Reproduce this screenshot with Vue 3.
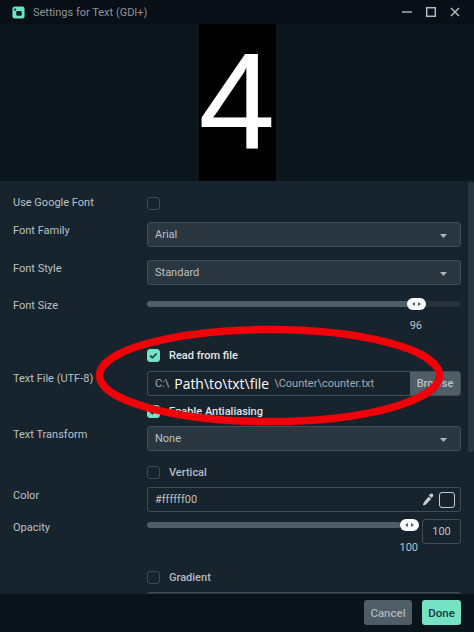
<script setup>
const selectChevron = 'M0 0h7L3.5 4z'
</script>

<template>
  <div class="win">
    <header class="titlebar">
      <svg class="logo" viewBox="0 0 14 14" width="13" height="13">
        <rect width="13" height="13" x="0.5" y="0.5" rx="2.5" fill="#6fe3c4" />
        <rect x="4.5" y="5.5" width="6" height="5" rx="1.4" fill="#10222a" />
        <circle cx="3.4" cy="4" r="1.2" fill="#10222a" />
      </svg>
      <span class="title">Settings for Text (GDI+)</span>
      <div class="winbtns">
        <svg viewBox="0 0 12 12" width="12" height="12"><path d="M1 6h10" stroke="#b4b9bc" stroke-width="1.4" /></svg>
        <svg viewBox="0 0 12 12" width="12" height="12"><rect x="1.7" y="1.7" width="8.6" height="8.6" fill="none" stroke="#b4b9bc" stroke-width="1.5" /></svg>
        <svg viewBox="0 0 12 12" width="12" height="12"><path d="M2 2l8 8M10 2l-8 8" stroke="#b4b9bc" stroke-width="1.5" /></svg>
      </div>
    </header>

    <section class="preview">
      <div class="canvas">4</div>
    </section>

    <main class="form">
      <div class="row r-google">
        <label>Use Google Font</label>
        <div class="checkline"><span class="check"></span></div>
      </div>

      <div class="row r-family">
        <label>Font Family</label>
        <div class="select">Arial<svg viewBox="0 0 7 4" width="7" height="4"><path :d="selectChevron" /></svg></div>
      </div>

      <div class="row r-style">
        <label>Font Style</label>
        <div class="select">Standard<svg viewBox="0 0 7 4" width="7" height="4"><path :d="selectChevron" /></svg></div>
      </div>

      <div class="row r-size">
        <label>Font Size</label>
        <div>
          <div class="track">
            <div class="fill fill-size"></div>
            <div class="thumb thumb-size"><i class="al"></i><i class="ar"></i></div>
          </div>
          <div class="val val-size">96</div>
        </div>
      </div>

      <div class="row r-read">
        <label></label>
        <div class="checkline"><span class="check on"><svg viewBox="0 0 13 13"><path d="M3.2 6.6l2.2 2.2 4.2-4.4" /></svg></span><span class="cl">Read from file</span></div>
      </div>

      <div class="row r-file">
        <label>Text File (UTF-8)</label>
        <div class="filebox">
          <div class="path"><span>C:\</span><span class="big">Path\to\txt\file</span><span>\Counter\counter.txt</span></div>
          <div class="browse">Browse</div>
        </div>
      </div>

      <div class="row r-anti">
        <label></label>
        <div class="checkline"><span class="check on"><svg viewBox="0 0 13 13"><path d="M3.2 6.6l2.2 2.2 4.2-4.4" /></svg></span><span class="cl">Enable Antialiasing</span></div>
      </div>

      <div class="row r-trans">
        <label>Text Transform</label>
        <div class="select">None<svg viewBox="0 0 7 4" width="7" height="4"><path :d="selectChevron" /></svg></div>
      </div>

      <div class="row r-vert">
        <label></label>
        <div class="checkline"><span class="check"></span><span class="cl dim">Vertical</span></div>
      </div>

      <div class="row r-color">
        <label>Color</label>
        <div class="colorbox">
          <span>#ffffff00</span>
          <svg class="drop" viewBox="0 0 12 13" width="12" height="13">
            <path d="M6.6 3.4l2.6 2.6-5 5.2c-.5.5-1.6.8-2.6 1.2-.5-.1-.7-.4-.6-.8.3-1 .6-2 1.1-2.6z" fill="#c6cbce" />
            <path d="M6.8 2.2l1.3-1.3c.8-.7 2-.7 2.7.1s.8 1.9 0 2.7L9.5 5z" fill="#c6cbce" />
          </svg>
          <span class="swatch"></span>
        </div>
      </div>

      <div class="row r-op">
        <label>Opacity</label>
        <div class="opline">
          <div class="opslider">
            <div class="track">
              <div class="fill fill-op"></div>
              <div class="thumb thumb-op"><i class="al"></i><i class="ar"></i></div>
            </div>
            <div class="val val-op">100</div>
          </div>
          <div class="numbox">100</div>
        </div>
      </div>

      <div class="row r-grad">
        <label></label>
        <div class="checkline"><span class="check"></span><span class="cl dim">Gradient</span></div>
      </div>

      <div class="row r-next">
        <label></label>
        <div class="select"></div>
      </div>

      <div class="scrollbar"></div>
    </main>

    <footer class="foot">
      <button class="btn cancel">Cancel</button>
      <button class="btn done">Done</button>
    </footer>

    <svg class="annot" viewBox="0 0 474 632" width="474" height="632">
      <ellipse cx="269.5" cy="375.5" rx="170" ry="46" fill="none" stroke="#f00008" stroke-width="7.5" />
    </svg>
  </div>
</template>

<style>
html, body { margin: 0; background: #17232d; }
</style>

<style scoped>
.win {
  position: relative;
  width: 474px;
  height: 632px;
  overflow: hidden;
  display: flex;
  flex-direction: column;
  background: #17232d;
  font-family: Roboto, "Liberation Sans", sans-serif;
  font-size: 11px;
  color: #bcc2c6;
}
.titlebar {
  height: 24px;
  flex: none;
  display: flex;
  align-items: center;
  padding-left: 12px;
  background: #080f16;
}
.logo { flex: none; }
.title { margin-left: 8px; font-size: 11px; color: #8e959a; }
.winbtns { margin-left: auto; margin-right: 13px; display: flex; gap: 12px; }
.preview {
  height: 157px;
  flex: none;
  display: flex;
  justify-content: center;
  background: #0c171d;
}
.canvas {
  box-sizing: border-box;
  width: 77px;
  height: 157px;
  padding-right: 6px;
  background: #000;
  color: #fff;
  text-align: center;
  font-family: "Liberation Sans", Arial, sans-serif;
  font-size: 138px;
  line-height: 153px;
}
.form {
  position: relative;
  flex: 1;
  min-height: 0;
  overflow: hidden;
}
.row {
  display: grid;
  grid-template-columns: 134px 314px;
  padding-left: 13px;
}
.row label { line-height: 13px; color: #bcc2c6; }
.check {
  display: block;
  box-sizing: border-box;
  width: 13px;
  height: 13px;
  border: 1px solid #3c4a54;
  border-radius: 3px;
  flex: none;
}
.check.on { background: #75e2c3; border-color: #75e2c3; }
.check.on svg { display: block; width: 13px; height: 13px; margin: -1px; fill: none; stroke: #17303a; stroke-width: 1.5; }
.checkline { display: flex; align-items: center; gap: 9px; height: 13px; }
.cl { color: #e3e6e8; font-weight: 500; }
.cl.dim { color: #b5bcc0; }
.select {
  box-sizing: border-box;
  height: 25px;
  display: flex;
  align-items: center;
  justify-content: space-between;
  padding: 0 13px 0 7px;
  border: 1px solid #414e57;
  border-radius: 3px;
  background: #2b3740;
  color: #bcc2c6;
}
.select svg { fill: #b0b6ba; margin-top: 2px; }
.track {
  position: relative;
  height: 6px;
  border-radius: 3px;
  background: #25323b;
}
.fill {
  height: 6px;
  border-radius: 3px;
  background: #4f5d66;
}
.fill-size { width: 266px; }
.fill-op { width: 254px; }
.thumb {
  position: absolute;
  top: -3px;
  width: 19px;
  height: 12px;
  border-radius: 6px;
  background: #fff;
}
.thumb-size { left: 260px; }
.thumb-op { left: 253px; }
.thumb .al, .thumb .ar {
  position: absolute;
  top: 3.5px;
  width: 0;
  height: 0;
  border-top: 2.5px solid transparent;
  border-bottom: 2.5px solid transparent;
}
.thumb .al { left: 5px; border-right: 3px solid #4f5d66; }
.thumb .ar { right: 5px; border-left: 3px solid #4f5d66; }
.val { line-height: 13px; color: #bcc2c6; text-align: right; }
.val-size { margin-top: 12px; padding-right: 39px; }
.val-op { margin-top: 13px; }
.filebox {
  box-sizing: border-box;
  height: 25px;
  display: flex;
  border: 1px solid #414e57;
  border-radius: 3px;
  overflow: hidden;
}
.path {
  flex: 1;
  display: flex;
  align-items: center;
  gap: 5px;
  padding-left: 7px;
  font-size: 11px;
  color: #a4abb0;
}
.path .big {
  font-family: "Open Sans", "Noto Sans", sans-serif;
  font-size: 13.9px;
  color: #fff;
}
.browse {
  width: 50px;
  display: flex;
  align-items: center;
  justify-content: center;
  background: #4f5d66;
  color: #bcc2c6;
  font-weight: 500;
}
.colorbox {
  box-sizing: border-box;
  height: 25px;
  display: flex;
  align-items: center;
  padding: 0 5px 0 7px;
  border: 1px solid #414e57;
  border-radius: 3px;
  color: #bcc2c6;
}
.drop { margin-left: auto; margin-right: 5px; }
.swatch {
  box-sizing: border-box;
  width: 16px;
  height: 16px;
  border: 1px solid #c6cbce;
  border-radius: 3px;
}
.opline { display: flex; gap: 4px; }
.opslider { width: 271px; padding-top: 3px; }
.numbox {
  box-sizing: border-box;
  width: 39px;
  height: 25px;
  display: flex;
  align-items: center;
  justify-content: center;
  border: 1px solid #414e57;
  border-radius: 3px;
}
.r-google { margin-top: 16px; }
.r-google label { margin-top: -1px; }
.r-family { margin-top: 12px; }
.r-family label { margin-top: 2px; }
.r-style { margin-top: 13px; }
.r-style label { margin-top: 2px; }
.r-size { margin-top: 16px; }
.r-size label { margin-top: -2px; }
.r-read { margin-top: 17px; }
.r-file { margin-top: 9px; }
.r-file label { margin-top: 1px; }
.r-anti { margin-top: 9px; }
.r-trans { margin-top: 8px; }
.r-trans label { margin-top: 2px; }
.r-vert { margin-top: 15px; }
.r-color { margin-top: 8px; }
.r-color label { margin-top: 2px; }
.r-op { margin-top: 7px; }
.r-op label { margin-top: 2px; }
.r-grad { margin-top: 17px; }
.r-next { margin-top: 8px; }
.scrollbar {
  position: absolute;
  top: 1px;
  right: 0;
  width: 6px;
  height: 270px;
  border-radius: 3px;
  background: #2b3740;
}
.foot {
  height: 38px;
  flex: none;
  display: flex;
  justify-content: flex-end;
  align-items: flex-start;
  gap: 10px;
  padding: 6px 13px 0 0;
  box-sizing: border-box;
  background: #0a141b;
}
.btn {
  height: 25px;
  border: 0;
  border-radius: 3px;
  padding: 0;
  font-family: inherit;
  font-size: 11.5px;
  font-weight: 500;
}
.cancel { width: 48px; background: #4f5d66; color: #aeb5b9; }
.done { width: 39px; background: #75e2c3; color: #17363b; }
.annot { position: absolute; inset: 0; pointer-events: none; }
</style>
